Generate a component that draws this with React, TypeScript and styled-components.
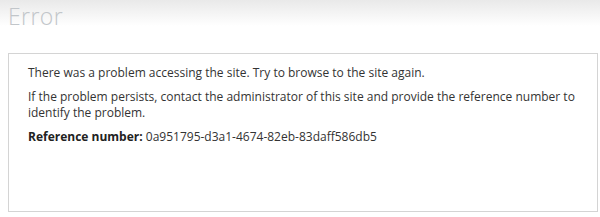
import React from "react";
import styled, { createGlobalStyle } from "styled-components";

const Global = createGlobalStyle`
  html, body { margin: 0; padding: 0; }
  body {
    width: 600px;
    height: 217px;
    overflow: hidden;
    background: linear-gradient(#e9e9e9 0px, #ffffff 26px, #ffffff 100%);
    font-family: "Open Sans", "Noto Sans", sans-serif;
  }
`;

const Page = styled.div`
  display: flex;
  flex-direction: column;
  padding: 0 3px 0 8px;
`;

const Title = styled.h1`
  margin: 0 0 20px 0;
  font-family: "Open Sans", "Noto Sans", sans-serif;
  font-weight: 300;
  font-size: 23px;
  line-height: 33px;
  letter-spacing: 0.4px;
  color: #c2c6ca;
`;

const Panel = styled.div`
  box-sizing: border-box;
  width: 590px;
  height: 159px;
  border: 1px solid #d4d4d4;
  background: #fff;
  padding: 11px 8px 0 19px;
  color: #333;
  font-size: 12px;
  line-height: 16px;
`;

const Para = styled.p<{ $gap?: number }>`
  margin: ${(p) => p.$gap ?? 0}px 0 8px 0;
`;

const Label = styled.span`
  font-weight: 700;
  color: #222;
`;

export default function App() {
  return (
    <>
      <Global />
      <Page>
        <Title>Error</Title>
        <Panel>
          <Para>There was a problem accessing the site. Try to browse to the site again.</Para>
          <Para>
            If the problem persists, contact the administrator of this site and provide the reference number to
            identify the problem.
          </Para>
          <Para $gap={3}>
            <Label>Reference number:</Label> 0a951795-d3a1-4674-82eb-83daff586db5
          </Para>
        </Panel>
      </Page>
    </>
  );
}
